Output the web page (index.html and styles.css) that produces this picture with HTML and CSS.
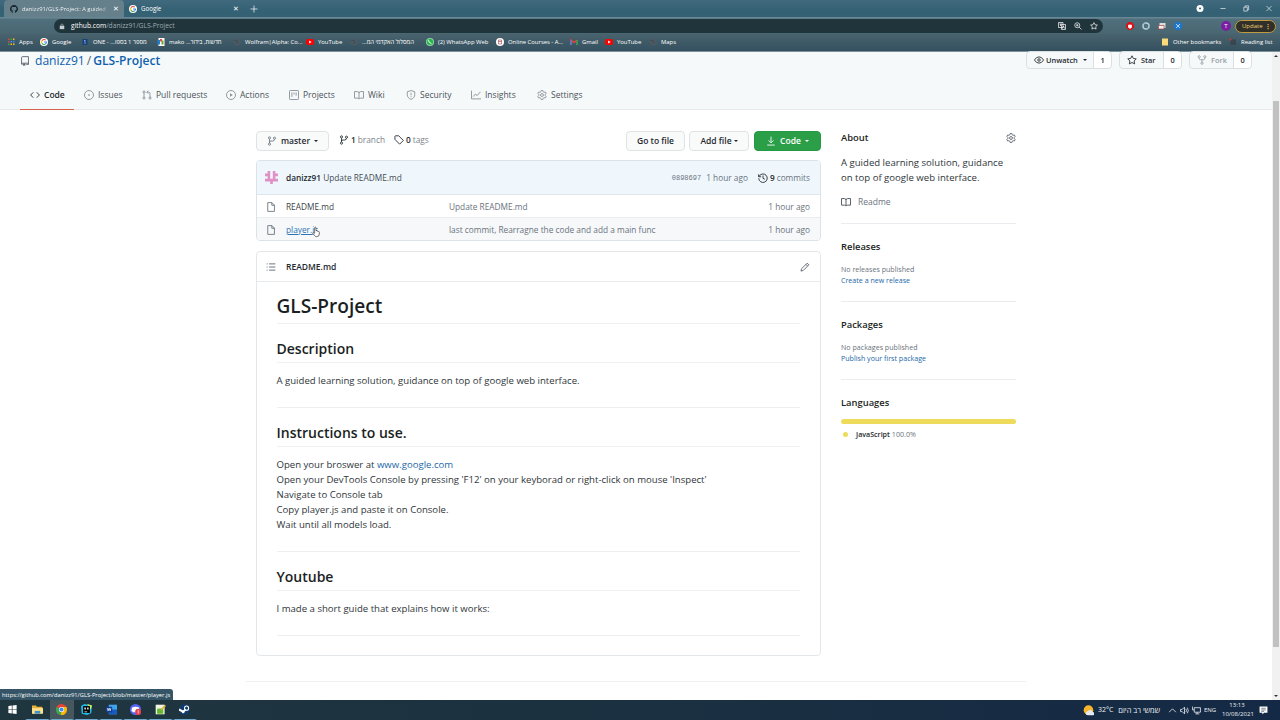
FILE: index.html
```html
<!DOCTYPE html>
<html lang="en">
<head>
    <meta charset="UTF-8">
    <meta name="viewport" content="width=device-width, initial-scale=1.0">
    <title>danizz91/GLS-Project</title>
    <link rel="stylesheet" href="styles.css">
</head>
<body>
    <!-- Shared icons -->
    <svg class="sprite" aria-hidden="true">
        <symbol id="i-code" viewBox="0 0 16 16"><path d="M5.2 3.7 1 8l4.2 4.3M10.8 3.7 15 8l-4.2 4.3"/></symbol>
        <symbol id="i-issue" viewBox="0 0 16 16"><circle cx="8" cy="8" r="7.2"/><circle cx="8" cy="8" r=".8"/></symbol>
        <symbol id="i-pull" viewBox="0 0 16 16"><circle cx="3.2" cy="3.2" r="1.7"/><circle cx="3.2" cy="12.8" r="1.7"/><circle cx="12.8" cy="12.8" r="1.7"/><path d="M3.2 5v6M12.8 11V5.5q0-2-2-2H8M10 1 7.6 3.5 10 6"/></symbol>
        <symbol id="i-play" viewBox="0 0 16 16"><circle cx="8" cy="8" r="7.2"/><path d="M6.5 5.3v5.4L10.8 8z" fill="currentColor" stroke="none"/></symbol>
        <symbol id="i-project" viewBox="0 0 16 16"><rect x=".8" y=".8" width="14.4" height="14.4" rx="1.2"/><path d="M4.6 4v7M8 4v3M11.4 4v5"/></symbol>
        <symbol id="i-book" viewBox="0 0 16 16"><path d="M.8 2.5h4.5Q8 2.5 8 5q0-2.5 2.7-2.5h4.5V13h-4.7Q8.5 13 8 14.5 7.5 13 5.5 13H.8zM8 5v9"/></symbol>
        <symbol id="i-shield" viewBox="0 0 16 16"><path d="M8 .9 14 2.8V7.5c0 3.5-2.3 6-6 7.5-3.7-1.5-6-4-6-7.5V2.8zM8 4.5v4M8 10v1.5"/></symbol>
        <symbol id="i-graph" viewBox="0 0 16 16"><path d="M.8 1v13.2H16M3.5 10.5 6.8 6.5l3 2.5L15 3"/></symbol>
        <symbol id="i-gear" viewBox="0 0 16 16"><path d="M6.7.8h2.6l.5 2 1.5.9 2-.6 1.3 2.3L13.2 7v2l1.4 1.5-1.3 2.3-2-.5-1.5.9-.5 2H6.700l-.5-2-1.5-.9-2 .5-1.3-2.3L2.800 9V7L1.400 5.400l1.300-2.300 2 .6 1.500-.9z"/><circle cx="8" cy="8" r="2.3"/></symbol>
        <symbol id="i-branch" viewBox="0 0 16 16"><circle cx="4" cy="3" r="1.7"/><circle cx="4" cy="13" r="1.7"/><circle cx="12" cy="3.5" r="1.7"/><path d="M4 5v6M12 5.2Q12 8 9 8H6.5Q4 8 4 10"/></symbol>
        <symbol id="i-fork" viewBox="0 0 16 16"><circle cx="3.5" cy="2.8" r="1.7"/><circle cx="12.5" cy="2.8" r="1.7"/><circle cx="8" cy="13.2" r="1.7"/><path d="M3.5 4.5v1q0 2 2 2h5q2 0 2-2v-1M8 7.5v4"/></symbol>
        <symbol id="i-tag" viewBox="0 0 16 16"><path d="M1.5 2v5L9 14.7 15 8.7 7.5 1.3H2.2zM5 5v.1"/></symbol>
        <symbol id="i-file" viewBox="0 0 16 16"><path d="M2.8 1h6.7l4 4v10H2.8zM9.3 1v4.3h4.2"/></symbol>
        <symbol id="i-list" viewBox="0 0 16 16"><path d="M5 3h10M5 8h10M5 13h10M1 3h1.5M1 8h1.5M1 13h1.5"/></symbol>
        <symbol id="i-pencil" viewBox="0 0 16 16"><path d="M1.5 14.5 2.5 10.8 11.5 1.8l2.7 2.7-9 9zM9.5 3.8l2.7 2.7"/></symbol>
        <symbol id="i-history" viewBox="0 0 16 16"><path d="M1.8 5.5A6.8 6.8 0 1 1 1.2 8.5M1 2v4h4M8 4v4.5l3 1.5"/></symbol>
        <symbol id="i-download" viewBox="0 0 16 16"><path d="M8 1v9.5M4 7l4 4 4-4M2 14.5h12"/></symbol>
        <symbol id="i-eye" viewBox="0 0 16 16"><path d="M.7 8Q3.5 3 8 3t7.3 5Q12.5 13 8 13T.7 8z"/><circle cx="8" cy="8" r="2"/></symbol>
        <symbol id="i-star" viewBox="0 0 16 16"><path d="m8 1.3 2.1 4.2 4.7.7-3.4 3.3.8 4.7L8 12l-4.2 2.2.8-4.7L1.2 6.2l4.7-.7z"/></symbol>
        <symbol id="i-repo" viewBox="0 0 16 16"><path d="M13.5 11.5H4.2Q2.5 11.5 2.5 13V2.5Q2.5 1 4.2 1h9.3v12.5H10M2.5 13q.3.8 1.5.8"/><path d="M5 12v4l1.7-1.2L8.5 16v-4z" fill="currentColor" stroke="none"/></symbol>
        <symbol id="i-google" viewBox="0 0 16 16"><circle cx="8" cy="8" r="8" fill="#fff" stroke="none"/><g stroke-width="2.2"><path d="M4 5.2A5 5 0 0 1 11.5 4.4" stroke="#ea4335"/><path d="M4 10.8A5 5 0 0 1 4 5.2" stroke="#fbbc05"/><path d="M11.2 11.8A5 5 0 0 1 4 10.8" stroke="#34a853"/><path d="M8 8h5a5 5 0 0 1-1.8 3.8" stroke="#4285f4"/></g></symbol>
        <symbol id="i-youtube" viewBox="0 0 16 16"><rect y="2" width="16" height="12" rx="4" fill="#f00" stroke="none"/><path d="M6.3 5v6l5-3z" fill="#fff" stroke="none"/></symbol>
        <symbol id="i-globe" viewBox="0 0 16 16"><circle cx="8" cy="8" r="7" fill="#4b5a62" stroke="none"/><path d="M3 5h5l2 3-3 4" stroke="#37474e"/></symbol>
        <symbol id="i-github" viewBox="0 0 16 16"><path fill="currentColor" stroke="none" d="M8 0C3.58 0 0 3.58 0 8c0 3.54 2.29 6.53 5.47 7.59.4.07.55-.17.55-.38v-1.49c-2.01.37-2.53-.49-2.69-.94-.09-.23-.48-.94-.82-1.13-.28-.15-.68-.52-.01-.53.63-.01 1.08.58 1.23.82.72 1.21 1.87.87 2.33.66.07-.52.28-.87.51-1.07-1.78-.2-3.64-.89-3.64-3.95 0-.87.31-1.59.82-2.15-.08-.2-.36-1.02.08-2.12 0 0 .67-.21 2.2.82a7.4 7.4 0 0 1 4 0c1.53-1.04 2.2-.82 2.2-.82.44 1.1.16 1.92.08 2.12.51.56.82 1.27.82 2.15 0 3.07-1.87 3.75-3.65 3.95.29.25.54.73.54 1.48v2.2c0 .21.15.46.55.38A8 8 0 0 0 16 8c0-4.42-3.58-8-8-8z"/></symbol>
    </svg>

    <!-- Browser -->
    <div class="browser">
        <div class="tabs">
            <div class="tab active">
                <svg class="icon dark"><use href="#i-github"/></svg>
                <span class="tab-title">danizz91/GLS-Project: A guided</span>
                <span class="close">✕</span>
            </div>
            <div class="tab">
                <svg class="icon"><use href="#i-google"/></svg>
                <span class="tab-title">Google</span>
                <span class="close">✕</span>
            </div>
            <svg class="icon plus" viewBox="0 0 16 16"><path d="M8 1v14M1 8h14"/></svg>
            <div class="window-buttons">
                <svg class="icon" viewBox="0 0 16 16"><circle cx="8" cy="8" r="8" fill="#fff" stroke="none"/><path d="M5 6h6l-3 5z" fill="#244" stroke="none"/></svg>
                <svg class="icon" viewBox="0 0 16 16"><path d="M2 8h12"/></svg>
                <svg class="icon" viewBox="0 0 16 16"><path d="M3 5h8v9H3zM6 5V2h8v9h-3"/></svg>
                <svg class="icon" viewBox="0 0 16 16"><path d="m2 2 12 12M14 2 2 14"/></svg>
            </div>
        </div>
        <div class="toolbar">
            <div class="omnibox">
                <svg class="icon lock" viewBox="0 0 16 16"><rect x="2" y="6" width="12" height="9" fill="currentColor" stroke="none"/><path d="M5 7V4q0-2.5 3-2.5T11 4v3"/></svg>
                <span class="url">github.com<i>/danizz91/GLS-Project</i></span>
                <div class="omni-icons">
                    <svg class="icon" viewBox="0 0 16 16"><path d="M1 1h9v10H1zM7 5h8v10H7zM3 4h5M5 4v4M9 13l2-5 2 5"/></svg>
                    <svg class="icon" viewBox="0 0 16 16"><circle cx="6.5" cy="6.5" r="5"/><path d="m10 10 5 5M4 6.5h5M6.5 4v5"/></svg>
                    <svg class="icon"><use href="#i-star"/></svg>
                </div>
            </div>
            <div class="extensions">
                <svg class="icon" viewBox="0 0 16 16"><path d="M5 0h6l5 5v6l-5 5H5l-5-5V5z" fill="#d51317" stroke="none"/><path d="M5 6h6v5l-3 2-3-2z" fill="#fff" stroke="#fff"/></svg>
                <svg class="icon" viewBox="0 0 16 16"><circle cx="8" cy="8" r="6" stroke="#b6ccd8" stroke-width="3"/><path d="m3 2 10 12" stroke="#5d8197"/></svg>
                <svg class="icon" viewBox="0 0 16 16"><path d="M3 2h12v10H3z" fill="#ddd" stroke="none"/><path d="M1 7h11v7H1z" fill="#f3f3f3" stroke="#a44"/></svg>
                <svg class="icon" viewBox="0 0 16 16"><circle cx="8" cy="8" r="8" fill="#1976d2" stroke="none"/><path d="m4 4 8 8M12 4l-8 8" stroke="#fff"/></svg>
            </div>
            <span class="avatar">T</span>
            <span class="update">Update <b>⋮</b></span>
        </div>
        <div class="bookmarks">
            <span><svg class="icon" viewBox="0 0 16 16"><g stroke="none"><path d="M2 1h3v3H2zM2 6h3v3H2z" fill="#ea4335"/><path d="M7 1h3v3H7zM2 11h3v3H2z" fill="#34a853"/><path d="M7 6h3v3H7zM12 6h3v3h-3z" fill="#4285f4"/><path d="M12 1h3v3h-3zM7 11h3v3H7zM12 11h3v3h-3z" fill="#fbbc05"/></g></svg>Apps</span>
            <span><svg class="icon"><use href="#i-google"/></svg>Google</span>
            <span><svg class="icon" viewBox="0 0 16 16"><path d="M3 2h10v12H3z" fill="#17407c" stroke="none"/><path d="M8 4v8M6 6l2-2" stroke="#9fc3ff"/></svg>ONE - ...מספר 1 בספו</span>
            <span><svg class="icon" viewBox="0 0 16 16"><path d="M3 0h12v16H3z" fill="#fff" stroke="none"/><path d="M1 4h5v9H1z" fill="#1f7ed0" stroke="none"/><path d="M6 2h4v5H6z" fill="#e44" stroke="none"/><path d="M9 5h4v8H9z" fill="#6aa32c" stroke="none"/></svg>mako ...חדשות, בידור</span>
            <span><svg class="icon"><use href="#i-globe"/></svg>Wolfram|Alpha: Co...</span>
            <span><svg class="icon"><use href="#i-youtube"/></svg>YouTube</span>
            <span><svg class="icon"><use href="#i-globe"/></svg><bdi dir="rtl">המסלול האקדמי המ...</bdi></span>
            <span><svg class="icon" viewBox="0 0 16 16"><circle cx="8" cy="8" r="7.5" fill="#25b84a" stroke="#fff" stroke-width="1"/><path d="M5 4.5q0 4.5 6 7" stroke="#fff" stroke-width="2"/></svg>(2) WhatsApp Web</span>
            <span><svg class="icon" viewBox="0 0 16 16"><circle cx="8" cy="8" r="8" fill="#fff" stroke="none"/><path d="M5 4h6v8H5zM5 7h6" stroke="#a55"/></svg>Online Courses - A...</span>
            <span><svg class="icon" viewBox="0 0 16 16"><path d="M2 14V4l6 5 6-5" stroke="#ea4335" stroke-width="3"/><path d="M2 14V5" stroke="#4285f4" stroke-width="3"/><path d="M14 14V4" stroke="#34a853" stroke-width="3"/></svg>Gmail</span>
            <span><svg class="icon"><use href="#i-youtube"/></svg>YouTube</span>
            <span><svg class="icon"><use href="#i-globe"/></svg>Maps</span>
            <span><svg class="icon" viewBox="0 0 16 16"><path d="M2 1h12v14H2z" fill="#fbd878" stroke="none"/></svg>Other bookmarks</span>
            <span><svg class="icon" viewBox="0 0 16 16"><path d="M3 3h11v11H3z" fill="#3b454d" stroke="none"/><circle cx="3" cy="3" r="2" fill="#d33" stroke="none"/></svg>Reading list</span>
        </div>
    </div>

    <!-- Page -->
    <div class="viewport">
        <div class="page">
            <header class="repo-header">
                <div class="repo-top">
                    <div class="repo-name">
                        <svg class="icon"><use href="#i-repo"/></svg>
                        <a>danizz91</a><span>/</span><a class="bold">GLS-Project</a>
                    </div>
                    <div class="social">
                        <div class="social-btn watch"><span><svg class="icon"><use href="#i-eye"/></svg>Unwatch<i class="caret"></i></span><b>1</b></div>
                        <div class="social-btn star"><span><svg class="icon"><use href="#i-star"/></svg>Star</span><b>0</b></div>
                        <div class="social-btn fork"><span><svg class="icon"><use href="#i-fork"/></svg>Fork</span><b>0</b></div>
                    </div>
                </div>
                <nav class="repo-nav">
                    <a class="selected"><svg class="icon"><use href="#i-code"/></svg>Code</a>
                    <a><svg class="icon"><use href="#i-issue"/></svg>Issues</a>
                    <a><svg class="icon"><use href="#i-pull"/></svg>Pull requests</a>
                    <a><svg class="icon"><use href="#i-play"/></svg>Actions</a>
                    <a><svg class="icon"><use href="#i-project"/></svg>Projects</a>
                    <a><svg class="icon"><use href="#i-book"/></svg>Wiki</a>
                    <a><svg class="icon"><use href="#i-shield"/></svg>Security</a>
                    <a><svg class="icon"><use href="#i-graph"/></svg>Insights</a>
                    <a><svg class="icon"><use href="#i-gear"/></svg>Settings</a>
                </nav>
            </header>

            <div class="layout">
                <main>
                    <div class="file-nav">
                        <span class="btn master"><svg class="icon"><use href="#i-branch"/></svg>master<i class="caret"></i></span>
                        <span class="count branches"><svg class="icon"><use href="#i-branch"/></svg><b>1</b> branch</span>
                        <span class="count"><svg class="icon"><use href="#i-tag"/></svg><b>0</b> tags</span>
                        <span class="btn goto">Go to file</span>
                        <span class="btn add">Add file<i class="caret"></i></span>
                        <span class="btn green"><svg class="icon"><use href="#i-download"/></svg>Code<i class="caret"></i></span>
                    </div>

                    <div class="files">
                        <div class="commit">
                            <svg class="identicon" viewBox="0 0 5 5"><path d="M1 0h1v1H1zM3 0h1v1H3zM0 1h2v1H0zM3 1h2v1H3zM1 2h1v1H1zM3 2h1v1H3zM0 3h5v1H0zM2 4h1v1H2z"/></svg>
                            <span class="message"><b>danizz91</b> Update README.md</span>
                            <code>0898697</code>
                            <span class="when">1 hour ago</span>
                            <span class="commits"><svg class="icon"><use href="#i-history"/></svg><b>9</b> commits</span>
                        </div>
                        <div class="file">
                            <svg class="icon"><use href="#i-file"/></svg>
                            <span class="name">README.md</span>
                            <span>Update README.md</span>
                            <span class="age">1 hour ago</span>
                        </div>
                        <div class="file hover">
                            <svg class="icon"><use href="#i-file"/></svg>
                            <a class="name">player.js<svg class="pointer" viewBox="0 0 12 16"><path d="M4 9V2q0-1.3 1-1.3T6 2v4q2-.7 2 .7 1.5-.5 1.5.7Q11 7 11 8.5V11q0 4-4 4-2.5 0-3.5-2L1 9.5Q1.5 8 4 9.8z"/></svg></a>
                            <span>last commit, Rearragne the code and add a main func</span>
                            <span class="age">1 hour ago</span>
                        </div>
                    </div>

                    <div class="readme">
                        <div class="readme-head">
                            <svg class="icon"><use href="#i-list"/></svg>
                            <span>README.md</span>
                            <svg class="icon"><use href="#i-pencil"/></svg>
                        </div>
                        <article>
                            <h1>GLS-Project</h1>
                            <h2>Description</h2>
                            <p>A guided learning solution, guidance on top of google web interface.</p>
                            <hr>
                            <h2>Instructions to use.</h2>
                            <p>Open your broswer at <a>www.google.com</a><br>
                            Open your DevTools Console by pressing 'F12' on your keyborad or right-click on mouse 'Inspect'<br>
                            Navigate to Console tab<br>
                            Copy player.js and paste it on Console.<br>
                            Wait until all models load.</p>
                            <hr>
                            <h2>Youtube</h2>
                            <p>I made a short guide that explains how it works:</p>
                            <hr>
                        </article>
                    </div>
                </main>

                <aside>
                    <section class="about">
                        <h3>About <svg class="icon"><use href="#i-gear"/></svg></h3>
                        <p>A guided learning solution, guidance<br>on top of google web interface.</p>
                        <div class="readme-link"><svg class="icon"><use href="#i-book"/></svg>Readme</div>
                    </section>
                    <section>
                        <h3>Releases</h3>
                        <small>No releases published</small>
                        <a>Create a new release</a>
                    </section>
                    <section>
                        <h3>Packages</h3>
                        <small>No packages published</small>
                        <a>Publish your first package</a>
                    </section>
                    <section>
                        <h3>Languages</h3>
                        <div class="lang-bar"></div>
                        <div class="lang"><i></i><b>JavaScript</b> 100.0%</div>
                    </section>
                </aside>
            </div>
            <div class="footer-line"></div>
        </div>
        <div class="scrollbar"><i class="up"></i><div class="thumb"></div><i class="down"></i></div>
        <div class="status">https://github.com/danizz91/GLS-Project/blob/master/player.js</div>
    </div>

    <!-- Taskbar -->
    <div class="taskbar">
        <div class="apps">
            <span><svg viewBox="0 0 16 16"><path d="M2 3l5-.7v5.2H2zM8 2.2 14 1.3v6.2H8zM2 8.5h5v5.2L2 13zM8 8.5h6v6.2l-6-.9z" fill="#fff"/></svg></span>
            <span class="open"><svg viewBox="0 0 16 16"><path d="M0 2h6l1 2h8v10H0z" fill="#e8b23a"/><path d="M0 6h16v8H0z" fill="#ffe08a"/><path d="M4 10h8v4H4z" fill="#3d93cf"/></svg></span>
            <span class="open current"><svg viewBox="0 0 16 16"><circle cx="8" cy="8" r="8" fill="#ea4335"/><path d="M8 8 1 4a8 8 0 0 0 6 12z" fill="#34a853"/><path d="M8 8h8a8 8 0 0 1-9 8z" fill="#fbbc05"/><path d="M8 4.5h7.2Q16 6 16 8l-5 2z" fill="#fbbc05"/><circle cx="8" cy="8" r="3.7" fill="#fff"/><circle cx="8" cy="8" r="2.9" fill="#4285f4"/></svg></span>
            <span class="open"><svg viewBox="0 0 16 16"><path d="M0 3 5 0l11 2-1 11-6 3-8-2z" fill="#21b9e6"/><path d="M9 0l7 2-2 6z" fill="#d8ee4b"/><path d="M3 3h10v10H3z" fill="#000"/><path d="M5 5h2v3H5zM9 5h2v3H9zM5 11h4v1H5z" fill="#fff"/></svg></span>
            <span class="open"><svg viewBox="0 0 16 16"><path d="M4 1h12v14H4z" fill="#41a5ee"/><path d="M4 8h12v7H4z" fill="#185abd"/><path d="M0 4h9v8H0z" fill="#103f91"/><path d="m2 6 1 4 1.5-4L6 10l1-4" fill="none" stroke="#fff"/></svg></span>
            <span class="open"><svg viewBox="0 0 16 16"><circle cx="8" cy="8" r="8" fill="#5865f2"/><path d="M3 5q5-2 10 0l1 5-3 2H5l-3-2z" fill="#fff"/><circle cx="12" cy="11.5" r="4.5" fill="#e53e4d"/><path d="M12 9v5" stroke="#fff"/></svg></span>
            <span class="open"><svg viewBox="0 0 16 16"><path d="M1 1h13v14H1z" fill="#f1f4e2"/><path d="M3 7l9-1v8H3z" fill="#65b92f"/><path d="m8 8 6-7 2 2-6 6z" fill="#ddb43c"/></svg></span>
            <span class="open"><svg viewBox="0 0 16 16"><circle cx="8" cy="8" r="8" fill="#123b6d"/><circle cx="11" cy="6" r="3" fill="none" stroke="#fff" stroke-width="1.5"/><path d="M0 8l6 3 4-3" stroke="#fff" stroke-width="3" fill="none"/><circle cx="6" cy="11.5" r="2" fill="#fff"/></svg></span>
        </div>
        <div class="tray">
            <svg class="weather" viewBox="0 0 16 16"><circle cx="8" cy="7.5" r="7" fill="#f8b62d"/><path d="M7 15a3 3 0 0 1 0-6 4 4 0 0 1 7 1 2.5 2.5 0 0 1 0 5z" fill="#e5eaf0"/></svg>
            <span class="temp">32°C</span>
            <span class="forecast" dir="rtl">שמשי רב היום</span>
            <svg class="icon" viewBox="0 0 16 16"><path d="m2 11 6-6 6 6"/></svg>
            <svg class="icon" viewBox="0 0 16 16"><path d="M1 6h3l4-4v12l-4-4H1zM10.5 5q2 3 0 6M13 3q3.5 5 0 10"/></svg>
            <svg class="icon" viewBox="0 0 16 16"><path d="M4 3h11v8H4zM9 11v3M6 14h7M1 1v6h3"/></svg>
            <span class="eng">ENG</span>
            <span class="clock">13:13<br>10/08/2021</span>
            <svg class="icon notice" viewBox="0 0 16 16"><path d="M1 1h14v11H9l-3 3v-3H1z" fill="#fff" stroke="none"/><path d="M4 4h8M4 7h8M4 9.5h5" stroke="#1b2d40" stroke-width="1"/></svg>
        </div>
    </div>
</body>
</html>
```
FILE: styles.css
```css
* {
    box-sizing: border-box;
}

body {
    margin: 0;
    width: 1280px;
    height: 720px;
    overflow: hidden;
    display: flex;
    flex-direction: column;
    font-family: "Open Sans", "Noto Sans", sans-serif;
    font-size: 8.5px;
    line-height: 12px;
    color: #24292e;
    background: #fff;
    white-space: nowrap;
}

b, .bold {
    font-weight: 600;
}

i {
    font-style: normal;
}

.sprite {
    position: absolute;
    width: 0;
    height: 0;
}

.icon {
    width: 10px;
    height: 10px;
    flex: none;
    fill: none;
    stroke: currentColor;
    stroke-width: 1.4;
}

.caret {
    border: 2.5px solid transparent;
    border-top-color: currentColor;
    border-bottom: 0;
}

/* Browser */
.browser {
    height: 52px;
    flex: none;
    color: #fff;
    font-size: 6.2px;
    border-bottom: 1px solid #7c929c;
}

.browser .icon {
    width: 8px;
    height: 8px;
}

.tabs {
    display: flex;
    align-items: center;
    height: 17px;
    padding-left: 4px;
    background: linear-gradient(#41697e, #346174 60%);
}

.tab {
    display: flex;
    align-items: center;
    width: 120px;
    height: 17px;
    padding: 0 5px;
}

.tab.active {
    background: #657f8b;
    border-radius: 4px 4px 0 0;
}

.tab .icon {
    margin-right: 4px;
}

.tab .dark {
    color: #16232b;
    margin-left: 1px;
}

.tab-title {
    flex: 1;
}

.active .tab-title {
    font-size: 5.8px;
    background: linear-gradient(90deg, #fff 85%, #8ea1aa);
    -webkit-background-clip: text;
    background-clip: text;
    color: transparent;
}

.close {
    margin-left: 4px;
    font-size: 7px;
}

.plus {
    margin-left: 6px;
}

.window-buttons {
    margin-left: auto;
    display: flex;
    gap: 15px;
    padding-right: 7px;
}

.window-buttons .icon {
    height: 7px;
}

.toolbar {
    display: flex;
    align-items: center;
    height: 17px;
    padding: 1px 4px 0 54px;
    background: linear-gradient(#688593 1px, #50707e 2px, #496671);
}

.omnibox {
    display: flex;
    align-items: center;
    width: 1049px;
    height: 14px;
    padding: 0 5px;
    border-radius: 7px;
    background: #20343b;
}

.omnibox .lock {
    width: 6px;
    height: 7px;
    margin-right: 6px;
    color: #c4ced2;
}

.url {
    font-size: 6.7px;
}

.url i {
    color: #9dabb0;
}

.omni-icons {
    display: flex;
    gap: 8px;
    margin-left: auto;
}

.extensions {
    display: flex;
    gap: 8px;
    margin-left: 23px;
}

.avatar {
    width: 10px;
    height: 10px;
    margin-left: 39px;
    border-radius: 50%;
    background: #7b1fa2;
    font-size: 6px;
    line-height: 10px;
    text-align: center;
}

.update {
    display: flex;
    justify-content: space-between;
    width: 41px;
    height: 13px;
    margin-left: auto;
    padding: 0 4px 0 6px;
    border: 1px solid #c09a3f;
    border-radius: 7px;
    background: #302f29;
    color: #f4cf6c;
    font-size: 6px;
    line-height: 11px;
}

.bookmarks {
    display: grid;
    grid-template-columns: 33px 41px 76px 76px 73px 44px 76px 70px 74px 35px 44px 512px 68px 44px;
    align-items: center;
    height: 17px;
    padding: 0 0 1px 7px;
    background: linear-gradient(#49636e, #34505f);
    font-size: 5.9px;
}

.bookmarks span {
    display: flex;
    align-items: center;
    gap: 4px;
}

/* Page */
.viewport {
    position: relative;
    display: flex;
    height: 648px;
    flex: none;
}

.page {
    width: 1272px;
}

.repo-header {
    height: 58px;
    padding-left: 20px;
    background: #f6f9fa;
    border-bottom: 1px solid #e6eaec;
}

.repo-top {
    display: flex;
    justify-content: space-between;
    height: 28px;
    padding-right: 20px;
}

.repo-name {
    display: flex;
    align-items: center;
    height: 18px;
    font-size: 12.1px;
    color: #0f5fae;
}

.repo-name .icon {
    margin-right: 5px;
    color: #57606a;
}

.repo-name span {
    margin: 0 2px;
    color: #57606a;
}

.social {
    display: flex;
    gap: 7px;
    font-size: 7.4px;
    font-weight: 600;
}

.social-btn {
    display: flex;
    height: 18px;
    margin-top: -1px;
    border: 1px solid #dbdfe2;
    border-radius: 4px;
    line-height: 16px;
}

.social-btn span {
    display: flex;
    align-items: center;
    gap: 2px;
    flex: 1;
    padding-left: 7px;
}

.social-btn .caret {
    margin-left: 3px;
}

.social-btn b {
    width: 18px;
    border-left: 1px solid #dbdfe2;
    background: #fff;
    text-align: center;
    border-radius: 0 4px 4px 0;
}

.watch {
    width: 86px;
}

.star, .fork {
    width: 63px;
}

.star span, .fork span {
    gap: 4px;
}

.fork span {
    color: #959da5;
}

.repo-nav {
    display: grid;
    grid-template-columns: 54px 58px 84px 63px 65px 52px 65px 66px 65px;
    height: 30px;
    color: #4b5359;
}

.repo-nav a {
    display: flex;
    align-items: center;
    gap: 4px;
    height: 30px;
    padding-left: 10px;
    color: inherit;
}

.repo-nav .icon {
    color: #868e94;
}

.repo-nav .selected, .repo-nav .selected .icon {
    color: #24292e;
}

.repo-nav .selected {
    padding-top: 1px;
    border-bottom: 1px solid #d9634a;
    font-weight: 600;
}

.layout {
    display: flex;
    gap: 20px;
    height: 571px;
    padding: 20px 0 0 256px;
}

main {
    width: 565px;
}

.file-nav {
    display: flex;
    align-items: center;
    height: 21px;
}

.btn {
    display: flex;
    align-items: center;
    justify-content: center;
    gap: 4px;
    height: 20px;
    border: 1px solid #dfe3e5;
    border-radius: 4px;
    background: #f9fbfb;
    font-weight: 600;
}

.master {
    width: 73px;
}

.master .icon {
    color: #6a737d;
}

.count {
    display: flex;
    align-items: center;
    gap: 2px;
    padding-bottom: 2px;
    color: #7b8389;
    font-size: 8.3px;
}

.count .icon, .count b {
    color: #24292e;
}

.branches {
    margin: 0 9px 0 10px;
}

.goto {
    width: 59px;
    margin-left: auto;
    margin-right: 4px;
}

.add {
    width: 60px;
    margin-right: 5px;
    gap: 2px;
}

.green {
    width: 67px;
    border-color: #259943;
    background: #2a9f48;
    color: #fff;
}

.files {
    height: 81px;
    margin-top: 9px;
    border: 1px solid #dce3e8;
    border-radius: 4px;
    overflow: hidden;
    font-size: 8.3px;
}

.commit {
    display: flex;
    align-items: center;
    height: 34px;
    padding: 0 10px 0 8px;
    border-bottom: 1px solid #dfe7ed;
    background: #eff7fd;
    color: #454d54;
}

.commit b {
    color: #24292e;
}

.identicon {
    width: 13px;
    height: 13px;
    margin-right: 8px;
    fill: #df91c5;
}

.commit code {
    margin-left: auto;
    color: #6a737d;
    font: 7px "Liberation Mono", monospace;
}

.when {
    margin: 0 10px 0 5px;
    color: #6a737d;
}

.commits {
    display: flex;
    gap: 2px;
    align-items: center;
    color: #6a737d;
}

.commits .icon {
    color: #24292e;
}

.file {
    display: grid;
    grid-template-columns: 20px 163px 1fr auto;
    align-items: center;
    height: 22px;
    padding: 1px 10px 0 9px;
    color: #6a737d;
}

.file.hover {
    height: 24px;
    padding: 0 10px 0 9px;
    border-top: 1px solid #eaedef;
    background: #f6f8fa;
}

.file .name {
    color: #3b4248;
}

.file a.name {
    position: relative;
    color: #2d74b5;
    text-decoration: underline;
}

.pointer {
    position: absolute;
    left: 26px;
    top: 2px;
    width: 8px;
    height: 12px;
    fill: #fff;
    stroke: #333;
}

.readme {
    height: 405px;
    margin-top: 10px;
    border: 1px solid #e4e7ea;
    border-radius: 4px;
}

.readme-head {
    display: flex;
    align-items: center;
    height: 30px;
    padding: 0 10px 0 9px;
    border-bottom: 1px solid #e8ebed;
    font-weight: 600;
}

.readme-head span {
    flex: 1;
    margin-left: 10px;
}

.readme-head .icon {
    color: #57606a;
}

article {
    padding: 12px 20px 0 19.5px;
    font-size: 9.58px;
    line-height: 15px;
    color: #30363b;
}

h1, h2, h3 {
    margin: 0;
    font-weight: 600;
    color: #1b1f23;
}

h1 {
    height: 30px;
    font-size: 19.1px;
    line-height: 24px;
    border-bottom: 1px solid #eef0f2;
}

h2 {
    height: 24px;
    margin-top: 15px;
    font-size: 14px;
    line-height: 20px;
    border-bottom: 1px solid #eef0f2;
}

article p {
    margin: 10px 0 19px;
}

article hr {
    height: 1px;
    margin: 0;
    border: 0;
    background: #eceef0;
}

a {
    color: #2468a8;
}

.repo-name a {
    color: #0f5fae;
}

aside {
    width: 175px;
}

aside section {
    height: 78px;
    padding-top: 15px;
    border-bottom: 1px solid #eaecef;
}

aside section:last-child {
    border: 0;
}

aside .about {
    height: 94px;
    padding-top: 0;
}

h3 {
    display: flex;
    align-items: center;
    justify-content: space-between;
    height: 16px;
    font-size: 9.4px;
    line-height: 16px;
}

h3 .icon {
    color: #57606a;
}

.about p {
    margin: 9px 0 11px;
    font-size: 9.58px;
    line-height: 15px;
    color: #30363b;
}

.readme-link {
    display: flex;
    align-items: center;
    gap: 7px;
    color: #6a737d;
}

.readme-link .icon {
    color: #444c53;
}

small, section a {
    display: block;
    font-size: 7.1px;
    line-height: 11px;
}

small {
    margin-top: 9px;
    color: #6a737d;
}

.lang-bar {
    height: 5px;
    margin-top: 8px;
    border-radius: 3px;
    background: #eedb5c;
}

.lang {
    display: flex;
    align-items: center;
    gap: 2px;
    margin-top: 4px;
    font-size: 7.1px;
    color: #6a737d;
}

.lang b {
    color: #24292e;
}

.lang i {
    width: 5px;
    height: 5px;
    margin: 0 6px 0 2px;
    border-radius: 50%;
    background: #eedb5c;
}

.footer-line {
    width: 780px;
    height: 1px;
    margin-left: 246px;
    background: #eff1f3;
}

.scrollbar {
    width: 8px;
    display: flex;
    flex-direction: column;
    align-items: center;
    padding: 3px 0;
    background: #f1f1f1;
}

.scrollbar .up, .scrollbar .down {
    border: 2px solid transparent;
    border-bottom: 2px solid #333;
    border-top: 0;
}

.scrollbar .down {
    margin-top: auto;
    transform: scaleY(-1);
}

.thumb {
    width: 6px;
    height: 546px;
    margin-top: 44px;
    background: #c1c1c1;
}

.status {
    position: absolute;
    left: 0;
    bottom: 0;
    width: 173px;
    height: 11px;
    padding-left: 2px;
    border-radius: 0 3px 0 0;
    background: #355566;
    color: #fff;
    font-size: 5.75px;
    line-height: 12px;
}

/* Taskbar */
.taskbar {
    display: flex;
    justify-content: space-between;
    height: 20px;
    flex: none;
    background: linear-gradient(90deg, #20363f, #1b3040 50%, #142945);
    color: #eef2f5;
    font-size: 6.4px;
}

.apps {
    display: flex;
}

.apps span {
    display: flex;
    align-items: center;
    justify-content: center;
    width: 24.6px;
    border-bottom: 1px solid transparent;
}

.apps span:first-child {
    width: 25px;
}

.apps svg {
    width: 11px;
    height: 11px;
}

.apps .open {
    border-bottom-color: #70a9cf;
    border-left: 2px solid transparent;
    border-right: 2px solid transparent;
    background-clip: padding-box;
}

.apps .current {
    background: #47575e;
    border-left-color: #47575e;
    border-right-color: #47575e;
}

.tray {
    display: flex;
    align-items: center;
    padding-right: 12px;
}

.weather {
    width: 11px;
    height: 11px;
    margin-right: 4px;
}

.temp {
    width: 19px;
    font-size: 7px;
}

.forecast {
    width: 43px;
    margin-right: 8px;
    font-size: 7.5px;
}

.tray .icon {
    width: 9px;
    height: 9px;
    margin-right: 3px;
}

.eng {
    width: 18px;
    font-size: 6px;
}

.clock {
    width: 30px;
    margin-right: 7px;
    font-size: 6px;
    line-height: 9px;
    text-align: center;
}

.tray .notice {
    margin-right: 0;
}
```
